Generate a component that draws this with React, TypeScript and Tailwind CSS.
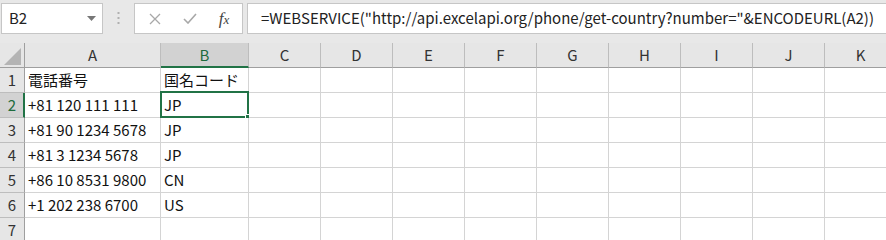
import React from 'react';

const FONT = '"Noto Sans CJK JP", "Noto Sans", sans-serif';

const columns = [
  { key: 'A', w: 'w-[136px]' },
  { key: 'B', w: 'w-[88px]' },
  { key: 'C', w: 'w-[72px]' },
  { key: 'D', w: 'w-[72px]' },
  { key: 'E', w: 'w-[72px]' },
  { key: 'F', w: 'w-[72px]' },
  { key: 'G', w: 'w-[72px]' },
  { key: 'H', w: 'w-[72px]' },
  { key: 'I', w: 'w-[72px]' },
  { key: 'J', w: 'w-[72px]' },
  { key: 'K', w: 'w-[72px]' },
];

const data: string[][] = [
  ['電話番号', '国名コード'],
  ['+81 120 111 111', 'JP'],
  ['+81 90 1234 5678', 'JP'],
  ['+81 3 1234 5678', 'JP'],
  ['+86 10 8531 9800', 'CN'],
  ['+1 202 238 6700', 'US'],
  [],
];

function FormulaBar() {
  return (
    <div className="flex h-[43px] shrink-0 items-start bg-[#e8e8e8] pt-[3px]">
      {/* Name box */}
      <div className="ml-[1px] flex h-[31px] w-[102px] shrink-0 items-center justify-between border border-[#c6c6c6] bg-white pl-[7px] pr-[6px]">
        <span className="text-[15px] text-[#222]">B2</span>
        <svg width="9" height="5" viewBox="0 0 9 5">
          <path d="M0 0h9L4.5 5z" fill="#777" />
        </svg>
      </div>
      {/* Dots */}
      <div className="flex w-[31px] shrink-0 justify-center pt-[9px]">
        <svg width="3" height="12" viewBox="0 0 3 12">
          <rect x="0.5" y="0" width="2" height="2" fill="#b0b0b0" />
          <rect x="0.5" y="5" width="2" height="2" fill="#b0b0b0" />
          <rect x="0.5" y="10" width="2" height="2" fill="#b0b0b0" />
        </svg>
      </div>
      {/* Cancel / enter / fx */}
      <div className="flex h-[31px] w-[109px] shrink-0 items-center border border-[#c6c6c6] bg-white">
        <div className="flex w-[38px] justify-center pl-[2px]">
          <svg width="12" height="12" viewBox="0 0 12 12">
            <path d="M1 1l10 10M11 1L1 11" stroke="#a8a8a8" strokeWidth="1.3" />
          </svg>
        </div>
        <div className="flex w-[34px] justify-center">
          <svg width="14" height="11" viewBox="0 0 14 11">
            <path d="M1 6l4 4 8-9" stroke="#a8a8a8" strokeWidth="1.6" fill="none" />
          </svg>
        </div>
        <div className="flex w-[34px] justify-center">
          <span
            className="text-[17px] italic leading-none text-[#444]"
            style={{ fontFamily: '"Liberation Serif", serif' }}
          >
            f<span className="text-[13px]">x</span>
          </span>
        </div>
      </div>
      {/* Formula text */}
      <div className="ml-[4px] flex h-[31px] flex-1 items-center overflow-hidden whitespace-nowrap border-y border-l border-[#c6c6c6] bg-white pl-[13px]">
        <span className="text-[15px] text-[#222]">
          =WEBSERVICE("http://api.excelapi.org/phone/get-country?number="&amp;ENCODEURL(A2))
        </span>
      </div>
    </div>
  );
}

function HeaderRow() {
  return (
    <div className="flex h-[25px] shrink-0">
      <div className="relative h-[25px] w-[25px] shrink-0 border-r border-b border-[#9f9f9f] bg-[#e6e6e6]">
        <svg className="absolute right-[3px] bottom-[2px]" width="17" height="17" viewBox="0 0 17 17">
          <path d="M17 0v17H0z" fill="#b4b4b4" />
        </svg>
      </div>
      {columns.map((c) =>
        c.key === 'B' ? (
          <div
            key={c.key}
            className={`${c.w} flex h-[25px] shrink-0 items-center justify-center border-r border-b-2 border-r-[#bdbdbd] border-b-[#217346] bg-[#d2d2d2] pt-[1px] text-[15px] text-[#1e6b3c]`}
          >
            {c.key}
          </div>
        ) : (
          <div
            key={c.key}
            className={`${c.w} flex h-[25px] shrink-0 items-center justify-center border-r border-b border-r-[#bdbdbd] border-b-[#9f9f9f] bg-[#e6e6e6] text-[15px] text-[#333]`}
          >
            {c.key}
          </div>
        )
      )}
    </div>
  );
}

function DataRow({ index, cells }: { index: number; cells: string[] }) {
  const active = index === 2;
  return (
    <div className="flex h-[25px] shrink-0">
      {active ? (
        <div className="flex h-[25px] w-[25px] shrink-0 items-center justify-center border-r-2 border-b border-r-[#217346] border-b-[#bdbdbd] bg-[#d2d2d2] pl-[1px] text-[15px] text-[#1e6b3c]">
          {index}
        </div>
      ) : (
        <div className="flex h-[25px] w-[25px] shrink-0 items-center justify-center border-r border-b border-r-[#9f9f9f] border-b-[#bdbdbd] bg-[#e6e6e6] text-[15px] text-[#333]">
          {index}
        </div>
      )}
      {columns.map((c, ci) => (
        <div
          key={c.key}
          className={`${c.w} relative flex h-[25px] shrink-0 items-center overflow-visible whitespace-nowrap border-r border-b border-[#d4d4d4] bg-white pl-[3px] text-[15px] text-[#111]`}
        >
          {cells[ci] ?? ''}
          {active && c.key === 'B' && (
            <>
              <div className="pointer-events-none absolute -top-[2px] -left-[1px] -right-[1px] -bottom-[1px] border-2 border-[#217346]" />
              <div className="absolute -right-[4px] -bottom-[4px] h-[7px] w-[7px] border border-white bg-[#217346]" />
            </>
          )}
        </div>
      ))}
    </div>
  );
}

export default function App() {
  return (
    <div
      className="flex h-[240px] w-[886px] flex-col overflow-hidden bg-white"
      style={{ fontFamily: FONT }}
    >
      <FormulaBar />
      <HeaderRow />
      {data.map((cells, i) => (
        <DataRow key={i} index={i + 1} cells={cells} />
      ))}
    </div>
  );
}
